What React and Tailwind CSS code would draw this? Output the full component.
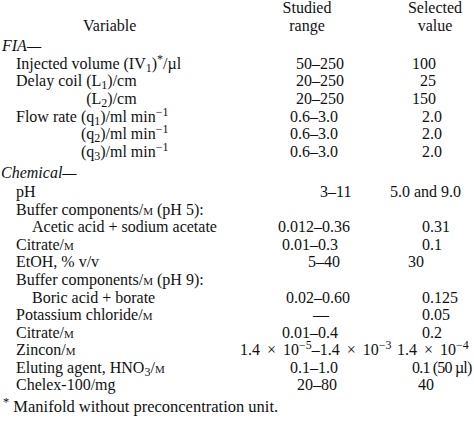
import React from "react";

const M = () => <span className="text-[11px] leading-none">M</span>;

const minus1 = <sup>−1</sup>;

// "×" with the wide math spacing of the printed table
const Times = () => <span className="px-[3px]"> × </span>;

const fiaRows = [
  {
    label: (
      <span className="pl-[16px]">
        Injected volume (IV<sub>1</sub>)<sup>*</sup>/µl
      </span>
    ),
    range: "50–250",
    rangePad: "pl-[60px]",
    value: "100",
    valuePad: "pl-[24px]",
  },
  {
    label: (
      <span className="pl-[16px]">
        Delay coil (L<sub>1</sub>)/cm
      </span>
    ),
    range: "20–250",
    rangePad: "pl-[60px]",
    value: "25",
    valuePad: "pl-[32px]",
  },
  {
    label: (
      <span className="pl-[16px]">
        <span className="invisible">Delay coil </span>(L<sub>2</sub>)/cm
      </span>
    ),
    range: "20–250",
    rangePad: "pl-[60px]",
    value: "150",
    valuePad: "pl-[24px]",
  },
  {
    label: (
      <span className="pl-[16px]">
        Flow rate (q<sub>1</sub>)/ml min{minus1}
      </span>
    ),
    range: "0.6–3.0",
    rangePad: "pl-[54px]",
    value: "2.0",
    valuePad: "pl-[34px]",
  },
  {
    label: (
      <span className="pl-[16px]">
        <span className="invisible">Flow rate </span>(q<sub>2</sub>)/ml min{minus1}
      </span>
    ),
    range: "0.6–3.0",
    rangePad: "pl-[54px]",
    value: "2.0",
    valuePad: "pl-[34px]",
  },
  {
    label: (
      <span className="pl-[16px]">
        <span className="invisible">Flow rate </span>(q<sub>3</sub>)/ml min{minus1}
      </span>
    ),
    range: "0.6–3.0",
    rangePad: "pl-[54px]",
    value: "2.0",
    valuePad: "pl-[34px]",
  },
];

const chemRows = [
  { label: <span className="pl-[16px]">pH</span>, range: "3–11", rangePad: "pl-[84px]", value: "5.0 and 9.0", valuePad: "pl-[2px]", extra: "mt-[1px]" },
  {
    label: (
      <span className="pl-[16px]">
        Buffer components/<M /> (pH 5):
      </span>
    ),
  },
  {
    label: <span className="pl-[32px]">Acetic acid + sodium acetate</span>,
    range: "0.012–0.36",
    rangePad: "pl-[42px]",
    value: "0.31",
    valuePad: "pl-[34px]",
  },
  {
    label: (
      <span className="pl-[16px]">
        Citrate/<M />
      </span>
    ),
    range: "0.01–0.3",
    rangePad: "pl-[46px]",
    value: "0.1",
    valuePad: "pl-[34px]",
  },
  { label: <span className="pl-[16px]">EtOH, % v/v</span>, range: "5–40", rangePad: "pl-[72px]", value: "30", valuePad: "pl-[20px]" },
  {
    label: (
      <span className="pl-[16px]">
        Buffer components/<M /> (pH 9):
      </span>
    ),
  },
  {
    label: <span className="pl-[32px]">Boric acid + borate</span>,
    range: "0.02–0.60",
    rangePad: "pl-[50px]",
    value: "0.125",
    valuePad: "pl-[34px]",
  },
  {
    label: (
      <span className="pl-[16px]">
        Potassium chloride/<M />
      </span>
    ),
    range: "—",
    rangePad: "pl-[77px]",
    value: "0.05",
    valuePad: "pl-[34px]",
  },
  {
    label: (
      <span className="pl-[16px]">
        Citrate/<M />
      </span>
    ),
    range: "0.01–0.4",
    rangePad: "pl-[46px]",
    value: "0.2",
    valuePad: "pl-[34px]",
  },
  {
    label: (
      <span className="pl-[16px]">
        Zincon/<M />
      </span>
    ),
    range: (
      <>
        1.4<Times />10<sup>−5</sup>–1.4<Times />10<sup>−3</sup>
      </>
    ),
    rangePad: "pl-[4px]",
    value: (
      <>
        1.4<Times />10<sup>−4</sup>
      </>
    ),
    valuePad: "pl-[9px]",
  },
  {
    label: (
      <span className="pl-[16px]">
        Eluting agent, HNO<sub>3</sub>/<M />
      </span>
    ),
    range: "0.1–1.0",
    rangePad: "pl-[54px]",
    value: <span className="tracking-[-0.8px]">0.1 (50 µl)</span>,
    valuePad: "pl-[24px]",
  },
  {
    label: <span className="pl-[16px]">Chelex-100/mg</span>,
    range: "20–80",
    rangePad: "pl-[61px]",
    value: "40",
    valuePad: "pl-[30px]",
  },
];

function Row({ row }) {
  return (
    <div className={`flex h-[17.6px] ${row.extra || ""}`}>
      <div className="w-[236px] shrink-0 whitespace-nowrap">{row.label}</div>
      <div className={`w-[152px] shrink-0 whitespace-nowrap ${row.rangePad || ""}`}>
        {row.range}
      </div>
      <div className={`flex-1 whitespace-nowrap ${row.valuePad || ""}`}>{row.value}</div>
    </div>
  );
}

export default function App() {
  return (
    <div className="w-[474px] h-[434px] overflow-hidden bg-white text-[#111]">
      <div
        className="-mt-[1px] text-[16px] leading-[17.6px]"
        style={{ fontFamily: '"Liberation Serif", "Times New Roman", serif' }}
      >
        {/* header */}
        <div className="flex h-[17.6px]">
          <div className="w-[236px] shrink-0" />
          <div className="w-[152px] shrink-0 pr-[10px] text-center">Studied</div>
          <div className="flex-1 pl-[8px] text-center">Selected</div>
        </div>
        <div className="flex h-[17.6px]">
          <div className="w-[236px] shrink-0 pl-[83px]">Variable</div>
          <div className="w-[152px] shrink-0 pr-[10px] text-center">range</div>
          <div className="flex-1 pl-[8px] text-center">value</div>
        </div>

        <div className="mt-[3px] h-[17.6px] pl-[2px] italic">FIA—</div>
        {fiaRows.map((r, i) => (
          <Row key={i} row={r} />
        ))}

        <div className="mt-[4px] h-[17.6px] pl-[1px] italic">Chemical—</div>
        {chemRows.map((r, i) => (
          <Row key={i} row={r} />
        ))}

        <div className="mt-[4px] pl-[3px] text-[16.5px]">
          <sup>*</sup> Manifold without preconcentration unit.
        </div>
      </div>
    </div>
  );
}
